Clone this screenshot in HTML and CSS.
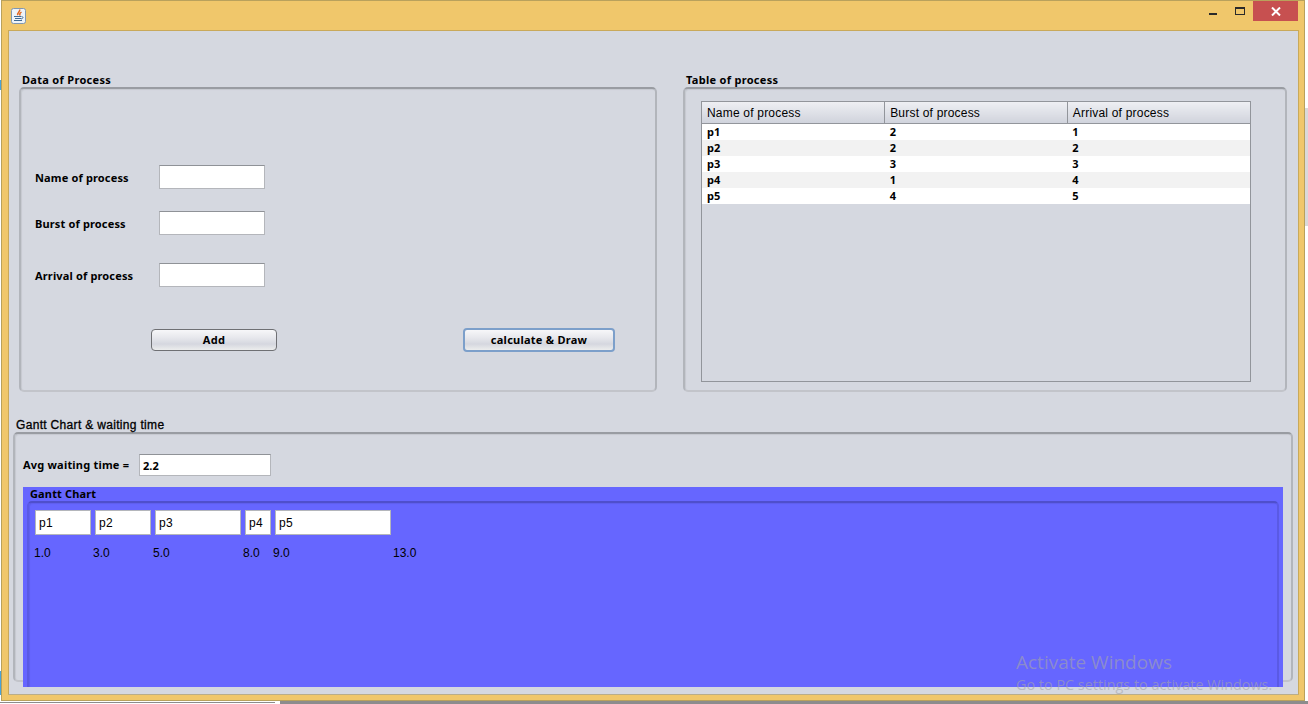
FILE: index.html
```html
<!DOCTYPE html>
<html>
<head>
  <link rel="stylesheet" href="styles.css">
  <title>Process scheduler</title>
</head>
<body>
  <div class="window">
    <div class="titlebar">
      <svg class="app-icon" width="15" height="16" viewBox="0 0 15 16">
        <rect x="0.5" y="0.5" width="14" height="15" rx="2" fill="#eef3f8" stroke="#7f97b2"/>
        <path d="M8.500 1.500c1.500 2-3 3-1.500 5.500M10.500 4c-1.500 1-2.500 2-1.200 3.500" fill="none" stroke="#e2661e" stroke-width="1.500"/>
        <path d="M3 8.500h7M4 10.500h6M3 12.500h8" fill="none" stroke="#3f6a94" stroke-width="1.200"/>
        <path d="M10.500 8.500c2 0 2 2-0.500 2.500" fill="none" stroke="#3f6a94" stroke-width="1"/>
      </svg>
      <div class="window-controls">
        <span class="btn-min"></span>
        <span class="btn-max"></span>
        <span class="btn-close">
          <svg width="10" height="9" viewBox="0 0 10 9"><path d="M1 0.500l8 8M9 0.500l-8 8" stroke="#fff" stroke-width="2"/></svg>
        </span>
      </div>
    </div>

    <div class="content">
      <div class="top-row">
        <div class="group group-data">
          <div class="group-title">Data of Process</div>
          <div class="group-box data-box">
            <div class="form-row">
              <label>Name of process</label>
              <input type="text" class="field">
            </div>
            <div class="form-row form-row-wide">
              <label>Burst of process</label>
              <input type="text" class="field">
            </div>
            <div class="form-row form-row-last">
              <label>Arrival of process</label>
              <input type="text" class="field">
            </div>
            <div class="button-row">
              <button class="btn btn-add">Add</button>
              <button class="btn btn-focus">calculate &amp; Draw</button>
            </div>
          </div>
        </div>

        <div class="group group-table">
          <div class="group-title">Table of process</div>
          <div class="group-box table-box">
            <div class="table-wrap">
              <table class="process-table">
                <thead>
                  <tr><th>Name of process</th><th>Burst of process</th><th>Arrival of process</th></tr>
                </thead>
                <tbody>
                  <tr><td>p1</td><td>2</td><td>1</td></tr>
                  <tr><td>p2</td><td>2</td><td>2</td></tr>
                  <tr><td>p3</td><td>3</td><td>3</td></tr>
                  <tr><td>p4</td><td>1</td><td>4</td></tr>
                  <tr><td>p5</td><td>4</td><td>5</td></tr>
                </tbody>
              </table>
            </div>
          </div>
        </div>
      </div>

      <div class="group group-gantt">
        <div class="group-title gantt-title">Gantt Chart &amp; waiting time</div>
        <div class="group-box gantt-box">
          <div class="avg-row">
            <label>Avg waiting time =</label>
            <input type="text" class="field avg-field" value="2.2">
          </div>
          <div class="gantt-panel">
            <div class="gantt-panel-title">Gantt Chart</div>
            <div class="gantt-inner">
              <div class="chips">
                <div class="chip" style="width: 56px">p1</div>
                <div class="chip" style="width: 56px">p2</div>
                <div class="chip" style="width: 86px">p3</div>
                <div class="chip" style="width: 26px">p4</div>
                <div class="chip" style="width: 116px">p5</div>
              </div>
              <div class="ticks">
                <span style="width: 59px">1.0</span>
                <span style="width: 60px">3.0</span>
                <span style="width: 90px">5.0</span>
                <span style="width: 30px">8.0</span>
                <span style="width: 120px">9.0</span>
                <span>13.0</span>
              </div>
            </div>
          </div>
        </div>
      </div>
    </div>
  </div>

  <div class="watermark">
    <div class="watermark-big">Activate Windows</div>
    <div class="watermark-small">Go to PC settings to activate Windows.</div>
  </div>
</body>
</html>
```

FILE: styles.css
```css
html, body {
  margin: 0;
  padding: 0;
}

/* bits of the desktop showing round the window */
body {
  width: 1308px;
  height: 704px;
  overflow: hidden;
  position: relative;
  background-color: #fff;
  background-image:
    linear-gradient(#d9d9d9, #d9d9d9),
    linear-gradient(#8c8c8c, #8c8c8c),
    linear-gradient(#8c8c8c, #8c8c8c),
    linear-gradient(#4aa3d8, #4aa3d8),
    linear-gradient(#4aa3d8, #4aa3d8);
  background-size: 3px 118px, 275px 1px, 1028px 3px, 1px 10px, 1px 24px;
  background-position: 1305px 108px, 0 702px, 280px 701px, 0 80px, 0 671px;
  background-repeat: no-repeat;
  font-family: "Liberation Sans", Arial, sans-serif;
  font-size: 12px;
  color: #000;
}

.window {
  box-sizing: border-box;
  width: 1304px;
  height: 701px;
  margin-left: 1px;
  background-color: #f0c76b;
  border: 1px solid #b9a15c;
  display: flex;
  flex-direction: column;
}

.titlebar {
  height: 29px;
  flex: none;
  display: flex;
  justify-content: space-between;
}

.app-icon {
  margin: 7px 0 0 9px;
}

.window-controls {
  display: flex;
  margin-right: 6px;
}

.btn-min {
  width: 8px;
  height: 2px;
  background-color: #2a2a2a;
  margin: 12px 18px 0 0;
}

.btn-max {
  box-sizing: border-box;
  width: 10px;
  height: 8px;
  border: 1px solid #2a2a2a;
  border-top-width: 2px;
  margin: 6px 8px 0 0;
}

.btn-close {
  width: 45px;
  height: 20px;
  background-color: #c75050;
  display: flex;
  align-items: center;
  justify-content: center;
}

.content {
  flex: 1;
  box-sizing: border-box;
  margin: 0 5px 5px 6px;
  background-color: #d5d8e0;
  border: 1px solid #c9a95a;
  border-bottom-color: #b9ad8a;
  overflow: hidden;
}

.top-row {
  display: flex;
  gap: 26px;
  padding: 41px 0 0 10px;
}

.group-data {
  width: 638px;
}

.group-table {
  width: 604px;
}

.group-title {
  height: 15px;
  line-height: 15px;
  padding-left: 3px;
  font-family: "Noto Sans", sans-serif;
  font-size: 11px;
  font-weight: bold;
  letter-spacing: 0.3px;
  color: #000;
}

.gantt-title {
  line-height: 17px;
  font-family: "Liberation Sans", Arial, sans-serif;
  font-size: 12px;
  letter-spacing: 0.32px;
  -webkit-text-stroke: 0.3px #000;
  font-weight: normal;
}

.group-box {
  box-sizing: border-box;
  border: 2px solid #b2b5bb;
  border-top-color: #999ca2;
  border-bottom-color: #c2c4ca;
  border-radius: 5px;
  box-shadow: inset 1px 1px 1px #c6c9d0;
}

.data-box {
  height: 305px;
  padding: 76px 0 0 14px;
}

.form-row {
  display: flex;
  align-items: center;
  margin-bottom: 22px;
}

.form-row-wide {
  margin-bottom: 28px;
}

.form-row-last {
  margin-bottom: 41px;
}

.form-row label,
.avg-row label {
  font-family: "Noto Sans", sans-serif;
  font-size: 11px;
  font-weight: bold;
  letter-spacing: 0.15px;
}

.form-row label {
  width: 124px;
}

.field {
  box-sizing: border-box;
  width: 106px;
  height: 24px;
  margin: 0;
  padding: 0 3px;
  background-color: #fff;
  border: 1px solid #b4b6bb;
  border-top-color: #8f9297;
  border-radius: 0;
  outline: none;
}

.button-row {
  display: flex;
  align-items: center;
  gap: 186px;
  padding-left: 116px;
}

.btn {
  box-sizing: border-box;
  width: 126px;
  height: 22px;
  padding: 0 0 2px;
  font-family: "Noto Sans", sans-serif;
  font-size: 11px;
  font-weight: bold;
  letter-spacing: 0.25px;
  color: #000;
  background: linear-gradient(#f7f7f9, #e6e7ec 40%, #d5d7df 70%, #eceded);
  border: 1px solid #6f7074;
  border-radius: 4px;
}

.btn-focus {
  width: 152px;
  height: 24px;
  border: 2px solid #7c9fca;
}

.table-box {
  height: 305px;
  padding: 12px 0 0 16px;
}

.table-wrap {
  box-sizing: border-box;
  width: 550px;
  height: 281px;
  border: 1px solid #92959b;
}

.process-table {
  width: 548px;
  border-collapse: collapse;
  table-layout: fixed;
}

.process-table th {
  box-sizing: border-box;
  height: 21px;
  padding: 2px 0 0 5px;
  text-align: left;
  font-weight: normal;
  font-size: 12px;
  letter-spacing: 0.2px;
  background: linear-gradient(#eeeff3, #d0d3dc);
  border-right: 1px solid #92959b;
  border-bottom: 1px solid #92959b;
}

.process-table th:last-child {
  border-right: none;
}

.process-table td {
  height: 16px;
  padding: 0 0 0 5px;
  font-family: "Noto Sans", sans-serif;
  font-size: 11px;
  font-weight: bold;
  line-height: 16px;
  background-color: #fff;
}

.process-table tbody tr:nth-child(even) td {
  background-color: #f2f2f2;
}

.group-gantt {
  width: 1280px;
  margin: 25px 0 0 4px;
}

.gantt-box {
  height: 250px;
  padding: 20px 8px 0 8px;
}

.avg-row {
  display: flex;
  align-items: center;
  height: 22px;
  margin-bottom: 11px;
}

.avg-row label {
  width: 116px;
  margin-top: -2px;
  letter-spacing: 0.2px;
}

.avg-field {
  width: 132px;
  height: 22px;
  font-family: "Noto Sans", sans-serif;
  font-size: 11px;
  font-weight: bold;
}

.gantt-panel {
  height: 200px;
  background-color: #6666ff;
  padding: 0 4px;
  overflow: hidden;
}

.gantt-panel-title {
  height: 14px;
  line-height: 14px;
  padding-left: 3px;
  font-family: "Noto Sans", sans-serif;
  font-size: 11px;
  font-weight: bold;
  letter-spacing: 0.15px;
}

.gantt-inner {
  box-sizing: border-box;
  height: 220px;
  border: 2px solid #5a5ae4;
  border-top-color: #4f4fcc;
  border-radius: 5px;
  padding: 7px 6px 0;
  box-shadow: inset 1px 1px 1px #5f5fee;
}

.chips {
  display: flex;
  gap: 4px;
}

.chip {
  box-sizing: border-box;
  height: 25px;
  line-height: 25px;
  padding-left: 3px;
  letter-spacing: 0.3px;
  background-color: #fff;
  border: 1px solid #b4b6bb;
}

.ticks {
  display: flex;
  margin: 11px 0 0 -1px;
  line-height: 14px;
}

.watermark {
  position: absolute;
  left: 1016px;
  top: 650px;
  font-family: "Open Sans", sans-serif;
  color: rgba(165, 165, 170, 0.6);
  white-space: nowrap;
}

.watermark-big {
  font-size: 19px;
  line-height: 24px;
}

.watermark-small {
  font-size: 14.4px;
  line-height: 22px;
}
```
